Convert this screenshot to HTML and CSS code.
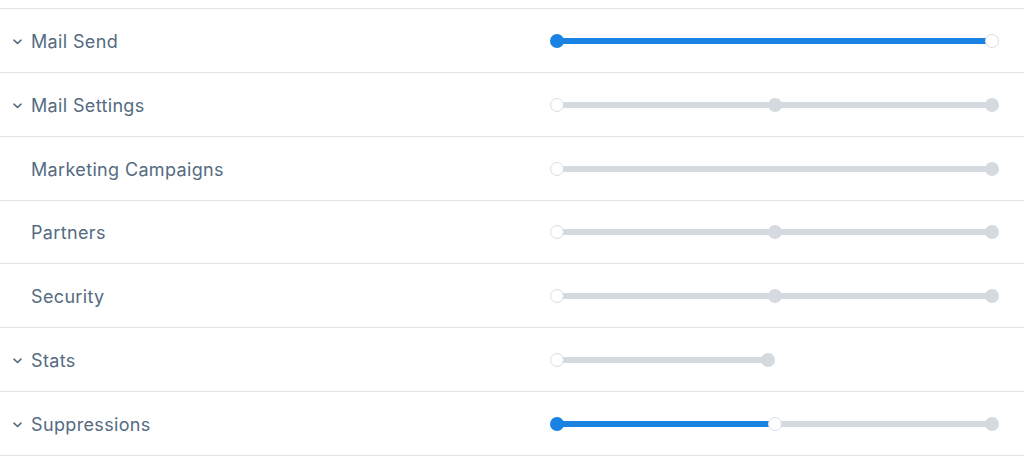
FILE: index.html
```html
<!DOCTYPE html>
<html>
<head>
<meta charset="utf-8">
<link rel="stylesheet" href="styles.css">
</head>
<body>
<div class="list">
  <div class="row">
    <div class="label"><span class="chev"><svg width="9" height="6" viewBox="0 0 9 6"><path d="M1 1.2 L4.5 4.5 L8 1.2" fill="none" stroke="#546b81" stroke-width="1.6" stroke-linecap="round" stroke-linejoin="round"/></svg></span><span class="name">Mail Send</span></div>
    <div class="slider full">
      <span class="dot blue"></span><span class="seg blue"></span><span class="dot hollow"></span>
    </div>
  </div>
  <div class="row">
    <div class="label"><span class="chev"><svg width="9" height="6" viewBox="0 0 9 6"><path d="M1 1.2 L4.5 4.5 L8 1.2" fill="none" stroke="#546b81" stroke-width="1.6" stroke-linecap="round" stroke-linejoin="round"/></svg></span><span class="name">Mail Settings</span></div>
    <div class="slider full">
      <span class="dot hollow"></span><span class="seg"></span><span class="dot"></span><span class="seg"></span><span class="dot"></span>
    </div>
  </div>
  <div class="row">
    <div class="label"><span class="chev"></span><span class="name">Marketing Campaigns</span></div>
    <div class="slider full">
      <span class="dot hollow"></span><span class="seg"></span><span class="dot"></span>
    </div>
  </div>
  <div class="row">
    <div class="label"><span class="chev"></span><span class="name">Partners</span></div>
    <div class="slider full">
      <span class="dot hollow"></span><span class="seg"></span><span class="dot"></span><span class="seg"></span><span class="dot"></span>
    </div>
  </div>
  <div class="row">
    <div class="label"><span class="chev"></span><span class="name">Security</span></div>
    <div class="slider full">
      <span class="dot hollow"></span><span class="seg"></span><span class="dot"></span><span class="seg"></span><span class="dot"></span>
    </div>
  </div>
  <div class="row">
    <div class="label"><span class="chev"><svg width="9" height="6" viewBox="0 0 9 6"><path d="M1 1.2 L4.5 4.5 L8 1.2" fill="none" stroke="#546b81" stroke-width="1.6" stroke-linecap="round" stroke-linejoin="round"/></svg></span><span class="name">Stats</span></div>
    <div class="slider short">
      <span class="dot hollow"></span><span class="seg"></span><span class="dot"></span>
    </div>
  </div>
  <div class="row">
    <div class="label"><span class="chev"><svg width="9" height="6" viewBox="0 0 9 6"><path d="M1 1.2 L4.5 4.5 L8 1.2" fill="none" stroke="#546b81" stroke-width="1.6" stroke-linecap="round" stroke-linejoin="round"/></svg></span><span class="name">Suppressions</span></div>
    <div class="slider full">
      <span class="dot blue"></span><span class="seg blue"></span><span class="dot hollow"></span><span class="seg"></span><span class="dot"></span>
    </div>
  </div>
</div>
</body>
</html>
```
FILE: styles.css
```css
html, body {
  margin: 0;
  padding: 0;
  background: #ffffff;
}
body {
  font-family: "Inter", "Open Sans", sans-serif;
  color: #546b81;
}
.list {
  padding-top: 8px;
}
.row {
  display: flex;
  align-items: center;
  justify-content: space-between;
  height: 62.85px;
  border-top: 1px solid #e1e5e9;
  padding: 0 25px 0 13px;
}
.row:last-child {
  border-bottom: 1px solid #e1e5e9;
}
.label {
  display: flex;
  align-items: center;
  padding-top: 3px;
}
.chev {
  width: 9px;
  height: 6px;
  margin-right: 9px;
  display: flex;
}
.name {
  font-size: 18px;
  line-height: 24px;
  letter-spacing: 0.35px;
}
.slider {
  display: flex;
  align-items: center;
  margin-top: 1px;
}
.slider.full {
  width: 449px;
}
.slider.short {
  width: 225px;
  margin-right: 224px;
}
.seg {
  flex: 1;
  height: 6px;
  background: #d4dadf;
  margin: 0 -1px;
}
.seg.blue {
  background: #1a82e2;
}
.dot {
  position: relative;
  z-index: 1;
  width: 14px;
  height: 14px;
  border-radius: 50%;
  background: #d4dadf;
  box-sizing: border-box;
}
.dot.blue {
  background: #1a82e2;
}
.dot.hollow {
  background: #ffffff;
  border: 1.5px solid #d9dee3;
}
```
